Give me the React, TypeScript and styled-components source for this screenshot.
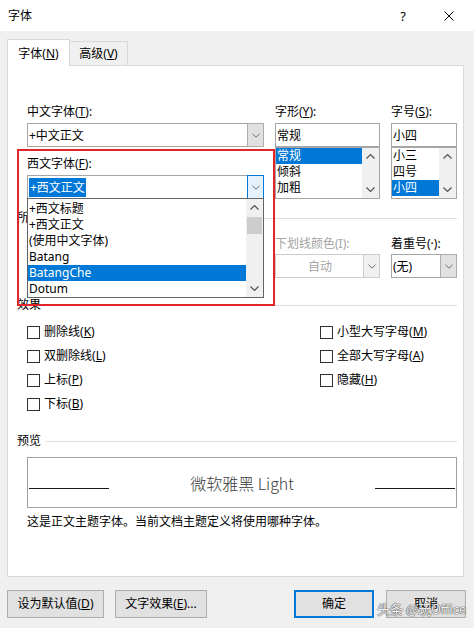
import React from "react";
import styled, { createGlobalStyle } from "styled-components";

const GlobalStyle = createGlobalStyle`
  *, *::before, *::after { box-sizing: border-box; }
  html, body { margin: 0; padding: 0; background: #f0f0f0; }
  body {
    font-family: "Noto Sans", "Noto Sans CJK SC", sans-serif;
    font-size: 12px;
    color: #000;
  }
  u { text-underline-offset: 1px; text-decoration-thickness: 1px; }
`;

const Dialog = styled.div`
  position: relative;
  width: 474px;
  height: 628px;
  background: #f0f0f0;
  overflow: hidden;
`;

const TitleBar = styled.div`
  height: 31px;
  background: #fff;
  display: flex;
  align-items: center;
  padding: 0 2px 0 8px;
`;

const Title = styled.div`
  flex: 1;
  line-height: 16px;
`;

const CaptionButton = styled.div`
  width: 46px;
  height: 31px;
  display: flex;
  align-items: center;
  justify-content: center;
  font-size: 13px;
`;

const Body = styled.div`
  padding: 0 8px 0 7px;
`;

const TabBar = styled.div`
  display: flex;
  align-items: flex-end;
  margin-top: 8px;
  height: 26px;
`;

const Tab = styled.div<{ $active?: boolean }>`
  position: relative;
  z-index: ${(p) => (p.$active ? 2 : 1)};
  width: ${(p) => (p.$active ? 63 : 58)}px;
  height: ${(p) => (p.$active ? 27 : 24)}px;
  margin-bottom: ${(p) => (p.$active ? -1 : 0)}px;
  padding-top: ${(p) => (p.$active ? 2 : 0)}px;
  background: ${(p) => (p.$active ? "#fff" : "#f0f0f0")};
  border: 1px solid #d9d9d9;
  border-bottom: none;
  ${(p) => (p.$active ? "" : "border-left: none;")}
  display: flex;
  align-items: center;
  justify-content: center;
  line-height: 16px;
  white-space: nowrap;
`;

const Panel = styled.div`
  width: 457px;
  height: 512px;
  background: #fff;
  border: 1px solid #d9d9d9;
  padding: 38px 6px 0 9px;
  display: flex;
  flex-direction: column;
`;

const FieldGrid = styled.div<{ $mt?: number }>`
  display: grid;
  grid-template-columns: 237px 105px 66px;
  column-gap: 11px;
  align-items: start;
  padding-left: 10px;
  margin-top: ${(p) => p.$mt ?? 0}px;
`;

/* the first column of this row lies under the open drop-down list */
const CoveredCell = styled.div`
  height: 42px;
`;

const Column = styled.div`
  display: flex;
  flex-direction: column;
`;

const Label = styled.div<{ $disabled?: boolean; $gap?: number; $mt?: number }>`
  height: 16px;
  line-height: 16px;
  white-space: nowrap;
  margin-top: ${(p) => p.$mt ?? 0}px;
  margin-bottom: ${(p) => p.$gap ?? 3}px;
  color: ${(p) => (p.$disabled ? "#a3a3a3" : "#000")};
`;

const ComboAnchor = styled.div`
  position: relative;
`;

const ComboShell = styled.div<{ $disabled?: boolean }>`
  height: 24px;
  display: flex;
  align-items: stretch;
  background: #fff;
  border: 1px solid ${(p) => (p.$disabled ? "#cccccc" : "#a6a6a6")};
`;

const ComboText = styled.div<{ $center?: boolean; $disabled?: boolean }>`
  flex: 1;
  display: flex;
  align-items: center;
  justify-content: ${(p) => (p.$center ? "center" : "flex-start")};
  padding-left: 1px;
  white-space: nowrap;
  overflow: hidden;
  color: ${(p) => (p.$disabled ? "#a3a3a3" : "#000")};
`;

const Selected = styled.span`
  background: #0078d7;
  color: #fff;
  line-height: 19px;
  padding: 0 1px 0 1px;
`;

const ComboButton = styled.div<{ $focused?: boolean; $disabled?: boolean }>`
  width: 17px;
  margin: -1px -1px -1px 0;
  display: flex;
  align-items: center;
  justify-content: center;
  border: 1px solid
    ${(p) => (p.$focused ? "#0078d7" : p.$disabled ? "#cccccc" : "#adadad")};
  background: ${(p) =>
    p.$focused ? "#e5f1fb" : p.$disabled ? "#f0f0f0" : "#e1e1e1"};
`;

const TextInput = styled.div`
  height: 24px;
  border: 1px solid #a6a6a6;
  background: #fff;
  display: flex;
  align-items: center;
  padding-left: 1px;
`;

const ListBox = styled.div<{ $h: number; $dark?: boolean }>`
  height: ${(p) => p.$h}px;
  border: 1px solid ${(p) => (p.$dark ? "#646464" : "#a6a6a6")};
  background: #fff;
  display: flex;
`;

const DropList = styled(ListBox)`
  position: absolute;
  left: 0;
  right: 0;
  top: calc(100% - 1px);
  z-index: 10;
`;

const ListItems = styled.div<{ $pt?: number }>`
  flex: 1;
  min-width: 0;
  padding-top: ${(p) => p.$pt ?? 0}px;
  display: flex;
  flex-direction: column;
`;

const ListItem = styled.div<{ $selected?: boolean }>`
  height: 16px;
  line-height: 16px;
  padding-left: 1px;
  white-space: nowrap;
  background: ${(p) => (p.$selected ? "#0078d7" : "transparent")};
  color: ${(p) => (p.$selected ? "#fff" : "#000")};
`;

const ScrollBar = styled.div`
  width: 17px;
  background: #f0f0f0;
  display: flex;
  flex-direction: column;
`;

const ScrollArrow = styled.div`
  height: 17px;
  display: flex;
  align-items: center;
  justify-content: center;
`;

const ScrollThumb = styled.div`
  height: 17px;
  margin: 1px 1px 0;
  background: #cdcdcd;
`;

const ScrollTrack = styled.div`
  flex: 1;
`;

const GroupHeader = styled.div<{ $mt: number }>`
  display: flex;
  align-items: center;
  gap: 4px;
  height: 16px;
  line-height: 16px;
  margin-top: ${(p) => p.$mt}px;
  white-space: nowrap;
  &::after {
    content: "";
    flex: 1;
    height: 1px;
    background: #dcdcdc;
  }
`;

const CheckGrid = styled.div`
  display: grid;
  grid-template-columns: 293px 1fr;
  grid-auto-rows: 24px;
  padding-left: 10px;
  margin-top: 7px;
`;

const CheckRow = styled.div`
  display: flex;
  align-items: center;
  gap: 4px;
  line-height: 16px;
  white-space: nowrap;
`;

const CheckBox = styled.span`
  width: 13px;
  height: 13px;
  border: 1px solid #333;
  background: #fff;
  flex: none;
`;

const PreviewBox = styled.div`
  margin: 8px 0 0 10px;
  height: 51px;
  border: 1px solid #a0a0a0;
  display: flex;
  align-items: center;
  justify-content: space-between;
  padding: 0 1px;
`;

const PreviewRule = styled.div`
  width: 80px;
  height: 1px;
  background: #1a1a1a;
  margin-top: 11px;
`;

const PreviewText = styled.div`
  font-family: "Noto Sans CJK SC", "Noto Sans", sans-serif;
  font-size: 16px;
  font-weight: 300;
  line-height: 20px;
  color: #3a3a3a;
  white-space: nowrap;
`;

const Description = styled.div`
  margin-top: 6px;
  padding-left: 10px;
  line-height: 16px;
  white-space: nowrap;
`;

const ButtonRow = styled.div`
  display: flex;
  margin-top: 13px;
`;

const Spacer = styled.div`
  flex: 1;
`;

const Button = styled.div<{ $w: number; $default?: boolean; $ml?: number }>`
  width: ${(p) => p.$w}px;
  height: 28px;
  margin-left: ${(p) => p.$ml ?? 0}px;
  background: #e1e1e1;
  border: ${(p) => (p.$default ? "2px solid #0078d7" : "1px solid #adadad")};
  display: flex;
  align-items: center;
  justify-content: center;
  line-height: 16px;
  white-space: nowrap;
`;

const Annotation = styled.div`
  position: absolute;
  left: 17px;
  top: 149px;
  width: 258px;
  height: 157px;
  border: 2px solid #e3242b;
  pointer-events: none;
  z-index: 20;
`;

const Watermark = styled.div`
  position: absolute;
  left: 377px;
  top: 599px;
  font-family: "Noto Sans CJK SC", sans-serif;
  font-size: 13px;
  line-height: 20px;
  color: rgba(255, 255, 255, 0.92);
  text-shadow: 0 0 1px #555, 0 0 1px #555, 0 0 1px #555;
  white-space: nowrap;
  z-index: 30;
`;

const Chevron = ({ up = false, big = false }: { up?: boolean; big?: boolean }) =>
  big ? (
    <svg width="9" height="5" viewBox="0 0 9 5">
      <polyline
        points={up ? "0.5,4.5 4.5,0.6 8.5,4.5" : "0.5,0.5 4.5,4.4 8.5,0.5"}
        fill="none"
        stroke="#555"
        strokeWidth="1.3"
      />
    </svg>
  ) : (
    <svg width="8" height="5" viewBox="0 0 8 5">
      <polyline points="0.5,0.8 4,4.2 7.5,0.8" fill="none" stroke="#6b6b6b" strokeWidth="1" />
    </svg>
  );

const CloseIcon = () => (
  <svg width="10" height="10" viewBox="0 0 10 10">
    <path d="M0.5 0.5 L9.5 9.5 M9.5 0.5 L0.5 9.5" stroke="#000" strokeWidth="1" />
  </svg>
);

type ComboProps = {
  text: React.ReactNode;
  focused?: boolean;
  disabled?: boolean;
  center?: boolean;
};

const Combo = ({ text, focused, disabled, center }: ComboProps) => (
  <ComboShell $disabled={disabled}>
    <ComboText $center={center} $disabled={disabled}>
      {text}
    </ComboText>
    <ComboButton $focused={focused} $disabled={disabled}>
      <Chevron />
    </ComboButton>
  </ComboShell>
);

const Scroll = ({ thumb }: { thumb?: boolean }) => (
  <ScrollBar>
    <ScrollArrow>
      <Chevron up big />
    </ScrollArrow>
    {thumb && <ScrollThumb />}
    <ScrollTrack />
    <ScrollArrow>
      <Chevron big />
    </ScrollArrow>
  </ScrollBar>
);

const westernFonts = ["+西文标题", "+西文正文", "(使用中文字体)", "Batang", "BatangChe", "Dotum"];
const styles = ["常规", "倾斜", "加粗"];
const sizes = ["小三", "四号", "小四"];

const checks: ([string, string] | null)[] = [
  ["删除线", "K"],
  ["小型大写字母", "M"],
  ["双删除线", "L"],
  ["全部大写字母", "A"],
  ["上标", "P"],
  ["隐藏", "H"],
  ["下标", "B"],
  null,
];

export default function App() {
  return (
    <>
      <GlobalStyle />
      <Dialog>
        <TitleBar>
          <Title>字体</Title>
          <CaptionButton>?</CaptionButton>
          <CaptionButton>
            <CloseIcon />
          </CaptionButton>
        </TitleBar>
        <Body>
          <TabBar>
            <Tab $active>
              字体(<u>N</u>)
            </Tab>
            <Tab>
              高级(<u>V</u>)
            </Tab>
          </TabBar>
          <Panel>
            <FieldGrid>
              <Column>
                <Label>
                  中文字体(<u>T</u>):
                </Label>
                <Combo text="+中文正文" />
                <Label $mt={9}>
                  西文字体(<u>F</u>):
                </Label>
                <ComboAnchor>
                  <Combo text={<Selected>+西文正文</Selected>} focused />
                  <DropList $h={100} $dark>
                    <ListItems $pt={2}>
                      {westernFonts.map((f) => (
                        <ListItem key={f} $selected={f === "BatangChe"}>
                          {f}
                        </ListItem>
                      ))}
                    </ListItems>
                    <Scroll thumb />
                  </DropList>
                </ComboAnchor>
              </Column>
              <Column>
                <Label>
                  字形(<u>Y</u>):
                </Label>
                <TextInput>常规</TextInput>
                <ListBox $h={52}>
                  <ListItems>
                    {styles.map((s) => (
                      <ListItem key={s} $selected={s === "常规"}>
                        {s}
                      </ListItem>
                    ))}
                  </ListItems>
                  <Scroll />
                </ListBox>
              </Column>
              <Column>
                <Label>
                  字号(<u>S</u>):
                </Label>
                <TextInput>小四</TextInput>
                <ListBox $h={52}>
                  <ListItems>
                    {sizes.map((s) => (
                      <ListItem key={s} $selected={s === "小四"}>
                        {s}
                      </ListItem>
                    ))}
                  </ListItems>
                  <Scroll />
                </ListBox>
              </Column>
            </FieldGrid>

            <GroupHeader $mt={11}>所</GroupHeader>
            <FieldGrid $mt={10}>
              <CoveredCell />
              <Column>
                <Label $gap={2} $disabled>
                  下划线颜色(I):
                </Label>
                <Combo text="自动" disabled center />
              </Column>
              <Column>
                <Label $gap={2}>着重号(·):</Label>
                <Combo text="(无)" />
              </Column>
            </FieldGrid>

            <GroupHeader $mt={19}>效果</GroupHeader>
            <CheckGrid>
              {checks.map((c, i) =>
                c ? (
                  <CheckRow key={i}>
                    <CheckBox />
                    <span>
                      {c[0]}(<u>{c[1]}</u>)
                    </span>
                  </CheckRow>
                ) : (
                  <span key={i} />
                )
              )}
            </CheckGrid>

            <GroupHeader $mt={17}>预览</GroupHeader>
            <PreviewBox>
              <PreviewRule />
              <PreviewText>微软雅黑 Light</PreviewText>
              <PreviewRule />
            </PreviewBox>
            <Description>这是正文主题字体。当前文档主题定义将使用哪种字体。</Description>
          </Panel>

          <ButtonRow>
            <Button $w={97}>
              设为默认值(<u>D</u>)
            </Button>
            <Button $w={92} $ml={11}>
              文字效果(<u>E</u>)...
            </Button>
            <Spacer />
            <Button $w={80} $default>
              确定
            </Button>
            <Button $w={80} $ml={12}>
              取消
            </Button>
          </ButtonRow>
        </Body>
        <Annotation />
        <Watermark>头条 @玩Office</Watermark>
      </Dialog>
    </>
  );
}
